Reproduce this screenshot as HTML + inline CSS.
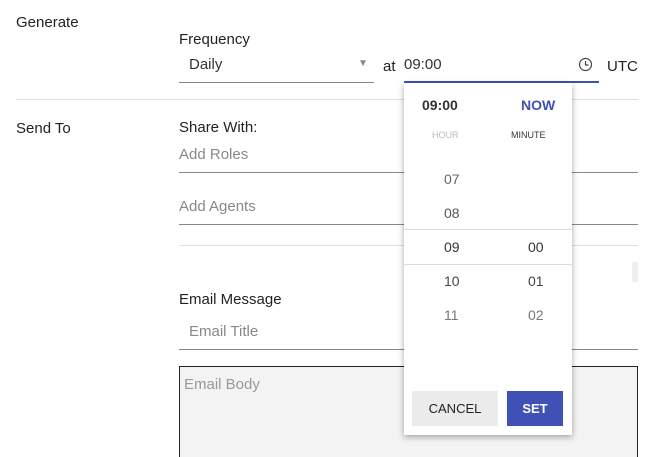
<!DOCTYPE html><html style="overflow:hidden;height:457px"><head><style>
body{margin:0;width:664px;height:457px;overflow:hidden;background:#fff;font-family:"Liberation Sans",sans-serif;color:#222;position:relative}
.a{position:absolute;white-space:nowrap}
.l{position:absolute;height:1px}
.p{color:#888;font-size:15px}
</style></head><body>
<div class="a" style="left:16px;top:14px;font-size:15px">Generate</div>
<div class="a" style="left:179px;top:31px;font-size:15px">Frequency</div>
<div class="a" style="left:189px;top:56px;font-size:15px;color:#333">Daily</div>
<div class="a" style="left:358px;top:58px;font-size:10px;color:#888">▼</div>
<div class="l" style="left:179px;top:82px;width:195px;background:#888"></div>
<div class="a" style="left:383px;top:58px;font-size:15px">at</div>
<div class="a" style="left:404px;top:56px;font-size:15px;color:#333">09:00</div>
<svg class="a" style="left:578px;top:57px" width="15" height="15" viewBox="0 0 15 15"><circle cx="7.5" cy="7.5" r="6" fill="none" stroke="#444" stroke-width="1.2"/><path d="M7.5 4v4h3" fill="none" stroke="#444" stroke-width="1.2"/></svg>
<div class="a" style="left:607px;top:58px;font-size:15px">UTC</div>
<div class="l" style="left:404px;top:81px;width:195px;height:2px;background:#3f51b5"></div>
<div class="l" style="left:16px;top:99px;width:622px;background:#e0e0e0"></div>
<div class="a" style="left:16px;top:120px;font-size:15px">Send To</div>
<div class="a" style="left:179px;top:119px;font-size:15px">Share With:</div>
<div class="a p" style="left:179px;top:146px">Add Roles</div>
<div class="l" style="left:179px;top:172px;width:459px;background:#888"></div>
<div class="a p" style="left:179px;top:198px">Add Agents</div>
<div class="l" style="left:179px;top:224px;width:459px;background:#888"></div>
<div class="l" style="left:179px;top:245px;width:459px;background:#e0e0e0"></div>
<div class="a" style="left:632px;top:262px;width:6px;height:20px;background:#eee"></div>
<div class="a" style="left:179px;top:291px;font-size:15px">Email Message</div>
<div class="a p" style="left:189px;top:323px">Email Title</div>
<div class="l" style="left:179px;top:349px;width:459px;background:#888"></div>
<div class="a" style="left:179px;top:366px;width:457px;height:91px;border:1px solid #222;border-bottom:none;background:#f3f3f3"></div>
<div class="a p" style="left:184px;top:376px;color:#999">Email Body</div>
<div class="a" style="left:404px;top:83px;width:168px;height:352px;background:#fff;box-shadow:0 2px 6px rgba(0,0,0,.35)">
<div class="a" style="left:18px;top:14px;font-size:14px;font-weight:bold;color:#333">09:00</div>
<div class="a" style="left:117px;top:14px;font-size:14px;font-weight:bold;color:#3f51b5">NOW</div>
<div class="a" style="left:28px;top:47px;font-size:9px;color:#bbb">HOUR</div>
<div class="a" style="left:107px;top:47px;font-size:9px;color:#333">MINUTE</div>
<div class="a" style="left:40px;top:88px;font-size:14px;color:#666">07</div>
<div class="a" style="left:40px;top:122px;font-size:14px;color:#555">08</div>
<div class="l" style="left:0;top:146px;width:168px;background:#ddd"></div>
<div class="a" style="left:40px;top:156px;font-size:14px;color:#333">09</div>
<div class="a" style="left:124px;top:156px;font-size:14px;color:#333">00</div>
<div class="l" style="left:0;top:181px;width:168px;background:#ddd"></div>
<div class="a" style="left:40px;top:190px;font-size:14px;color:#444">10</div>
<div class="a" style="left:124px;top:190px;font-size:14px;color:#444">01</div>
<div class="a" style="left:40px;top:224px;font-size:14px;color:#777">11</div>
<div class="a" style="left:124px;top:224px;font-size:14px;color:#777">02</div>
<div class="a" style="left:8px;top:308px;width:86px;height:35px;background:#ebebeb;font-size:13px;line-height:35px;text-align:center;color:#222">CANCEL</div>
<div class="a" style="left:103px;top:308px;width:56px;height:35px;background:#3f51b5;font-size:13px;font-weight:bold;line-height:35px;text-align:center;color:#fff">SET</div>
</div>
</body></html>
